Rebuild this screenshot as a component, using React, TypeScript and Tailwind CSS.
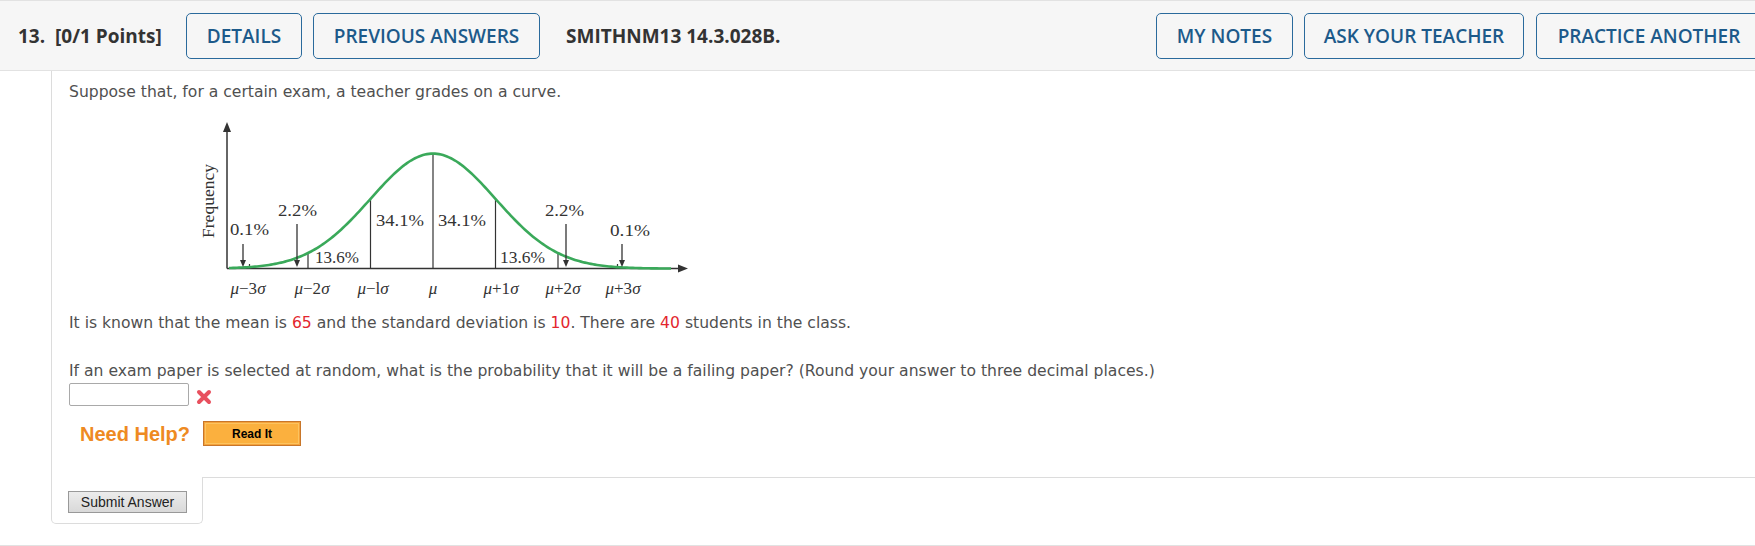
import React from "react";

const MU = 433;
const SIG = 62.5;
const BASE = 268.6;
const PEAK = 115;

function curveY(x: number) {
  const z = (x - MU) / SIG;
  return BASE - PEAK * Math.exp(-(z * z) / 2);
}

function Arrow({ x, y1, y2 }: { x: number; y1: number; y2: number }) {
  return (
    <g>
      <line x1={x} y1={y1} x2={x} y2={y2 - 5} stroke="#333" strokeWidth={1.3} />
      <polygon points={`${x - 3},${y2 - 7} ${x + 3},${y2 - 7} ${x},${y2}`} fill="#333" />
    </g>
  );
}

function XLabel({ x, sign, n }: { x: number; sign?: string; n?: string }) {
  return (
    <text x={x} y={294} textAnchor="middle" fontFamily="'Liberation Serif', serif" fontSize={17} fill="#333">
      <tspan fontStyle="italic">μ</tspan>
      {sign ? <tspan>{sign + n}</tspan> : null}
      {sign ? <tspan fontStyle="italic">σ</tspan> : null}
    </text>
  );
}

function Chart() {
  const pts: string[] = [];
  for (let x = 229; x <= 672; x += 2) {
    pts.push(`${x},${curveY(x).toFixed(2)}`);
  }
  const lines = [MU - 2 * SIG, MU - SIG, MU, MU + SIG, MU + 2 * SIG];
  const lbl = { fontFamily: "'Liberation Serif', serif", fontSize: 17.5, fill: "#333" } as const;
  return (
    <svg width={510} height={190} viewBox="190 112 510 190" className="block">
      <line x1={227} y1={268.6} x2={680} y2={268.6} stroke="#333" strokeWidth={1.5} />
      <polygon points="678,264.6 688,268.6 678,272.6" fill="#333" />
      <line x1={227} y1={268.6} x2={227} y2={130} stroke="#333" strokeWidth={1.5} />
      <polygon points="223,132 227,122 231,132" fill="#333" />
      {lines.map((x) => (
        <line key={x} x1={x} y1={268.6} x2={x} y2={curveY(x)} stroke="#333" strokeWidth={1.2} />
      ))}
      <line x1={MU - 3 * SIG + 4} y1={268.6} x2={MU - 3 * SIG + 4} y2={264} stroke="#333" strokeWidth={1.2} />
      <line x1={MU + 3 * SIG - 3} y1={268.6} x2={MU + 3 * SIG - 3} y2={264} stroke="#333" strokeWidth={1.2} />
      <polyline points={pts.join(" ")} fill="none" stroke="#3aa95a" strokeWidth={2.6} />
      <Arrow x={243} y1={244} y2={267} />
      <Arrow x={297} y1={224} y2={267} />
      <Arrow x={566} y1={224} y2={267} />
      <Arrow x={622} y1={244} y2={267} />
      <text x={230} y={235} {...lbl} textLength={39} lengthAdjust="spacingAndGlyphs">0.1%</text>
      <text x={278} y={216} {...lbl} textLength={39} lengthAdjust="spacingAndGlyphs">2.2%</text>
      <text x={315} y={263} {...lbl} textLength={44} lengthAdjust="spacingAndGlyphs">13.6%</text>
      <text x={376} y={226} {...lbl} textLength={48} lengthAdjust="spacingAndGlyphs">34.1%</text>
      <text x={438} y={226} {...lbl} textLength={48} lengthAdjust="spacingAndGlyphs">34.1%</text>
      <text x={500} y={263} {...lbl} textLength={45} lengthAdjust="spacingAndGlyphs">13.6%</text>
      <text x={545} y={216} {...lbl} textLength={39} lengthAdjust="spacingAndGlyphs">2.2%</text>
      <text x={610} y={236} {...lbl} textLength={40} lengthAdjust="spacingAndGlyphs">0.1%</text>
      <text x={214} y={201} transform="rotate(-90 214 201)" textAnchor="middle" {...lbl}>
        Frequency
      </text>
      <XLabel x={248} sign="−" n="3" />
      <XLabel x={312} sign="−" n="2" />
      <XLabel x={373} sign="−" n="l" />
      <XLabel x={433} />
      <XLabel x={501} sign="+" n="1" />
      <XLabel x={563} sign="+" n="2" />
      <XLabel x={623} sign="+" n="3" />
    </svg>
  );
}

function HeaderButton({ w, children }: { w: string; children: React.ReactNode }) {
  return (
    <div
      className={`${w} h-[46px] flex-none flex items-center justify-center rounded-[5px] border-[1.5px] border-[#2a6a9c] text-[#1d5a8a] text-[19px] font-semibold`}
    >
      {children}
    </div>
  );
}

export default function App() {
  const body = { fontFamily: "'DejaVu Sans', Verdana, sans-serif" } as const;
  return (
    <div className="w-[1755px] h-[546px] overflow-hidden bg-white">
      <div
        className="h-[71px] border-t border-b border-[#e2e2e2] bg-[#f6f6f6] flex items-center overflow-hidden pt-[1px]"
        style={{ fontFamily: "'Open Sans', sans-serif" }}
      >
        <div className="w-[186px] flex-none pl-[18px] text-[19px] font-bold text-[#333] whitespace-pre">13.  [0/1 Points]</div>
        <HeaderButton w="w-[116px]">DETAILS</HeaderButton>
        <div className="w-[11px] flex-none" />
        <HeaderButton w="w-[227px]">PREVIOUS ANSWERS</HeaderButton>
        <div className="w-[616px] flex-none pl-[26px] text-[19px] font-bold text-[#333]">SMITHNM13 14.3.028B.</div>
        <HeaderButton w="w-[137px]">MY NOTES</HeaderButton>
        <div className="w-[11px] flex-none" />
        <HeaderButton w="w-[220px]">ASK YOUR TEACHER</HeaderButton>
        <div className="w-[12px] flex-none" />
        <HeaderButton w="w-[226px]">PRACTICE ANOTHER</HeaderButton>
      </div>

      <div className="ml-[51px]">
        <div className="border-l border-[#dcdcdc] pl-[17px] pt-[11px] pb-[31px] text-[15.6px] text-[#505050]" style={body}>
          <div className="leading-[20px]">Suppose that, for a certain exam, a teacher grades on a curve.</div>
          <div className="mt-[10px] ml-[121px]">
            <Chart />
          </div>
          <div className="mt-[11px] leading-[20px]">
            It is known that the mean is <span className="text-[#e3262e]">65</span> and the standard deviation is{" "}
            <span className="text-[#e3262e]">10</span>. There are <span className="text-[#e3262e]">40</span> students in the class.
          </div>
          <div className="mt-[28px] leading-[20px]">
            If an exam paper is selected at random, what is the probability that it will be a failing paper? (Round your answer to three decimal places.)
          </div>
          <div className="mt-[2px] flex items-center">
            <div className="w-[120px] h-[23px] border border-[#a9a9a9] rounded-[2px] bg-white" />
            <svg width={16} height={16} viewBox="0 0 16 16" className="ml-[7px] mt-[4px]">
              <path d="M3 3 L13 13 M13 3 L3 13" stroke="#e8505e" strokeWidth={4} strokeLinecap="round" />
            </svg>
          </div>
          <div className="mt-[15px] ml-[11px] flex items-center" style={{ fontFamily: "'Liberation Sans', Arial, sans-serif" }}>
            <span className="text-[20px] font-bold text-[#ee8a22] leading-none">Need Help?</span>
            <div className="ml-[13px] w-[98px] h-[25px] border border-[#c8762a] bg-[#fbb03e] shadow-[inset_0_0_0_1px_#f4a23a,inset_0_0_0_2px_#fcc35f] flex items-center justify-center text-[12px] font-bold text-black">
              Read It
            </div>
          </div>
        </div>
        <div className="flex">
          <div className="w-[152px] h-[47px] flex-none border-l border-r border-b border-[#dcdcdc] rounded-b-[5px] pl-[16px] pt-[14px]">
            <div
              className="w-[119px] h-[22px] border border-[#999] bg-gradient-to-b from-[#ececec] to-[#d9d9d9] flex items-center justify-center text-[14px] text-[#222]"
              style={{ fontFamily: "'Liberation Sans', Arial, sans-serif" }}
            >
              Submit Answer
            </div>
          </div>
          <div className="flex-1 border-t border-[#dcdcdc]" />
        </div>
      </div>
      <div className="mt-[21px] border-t border-[#e2e2e2]" />
    </div>
  );
}
